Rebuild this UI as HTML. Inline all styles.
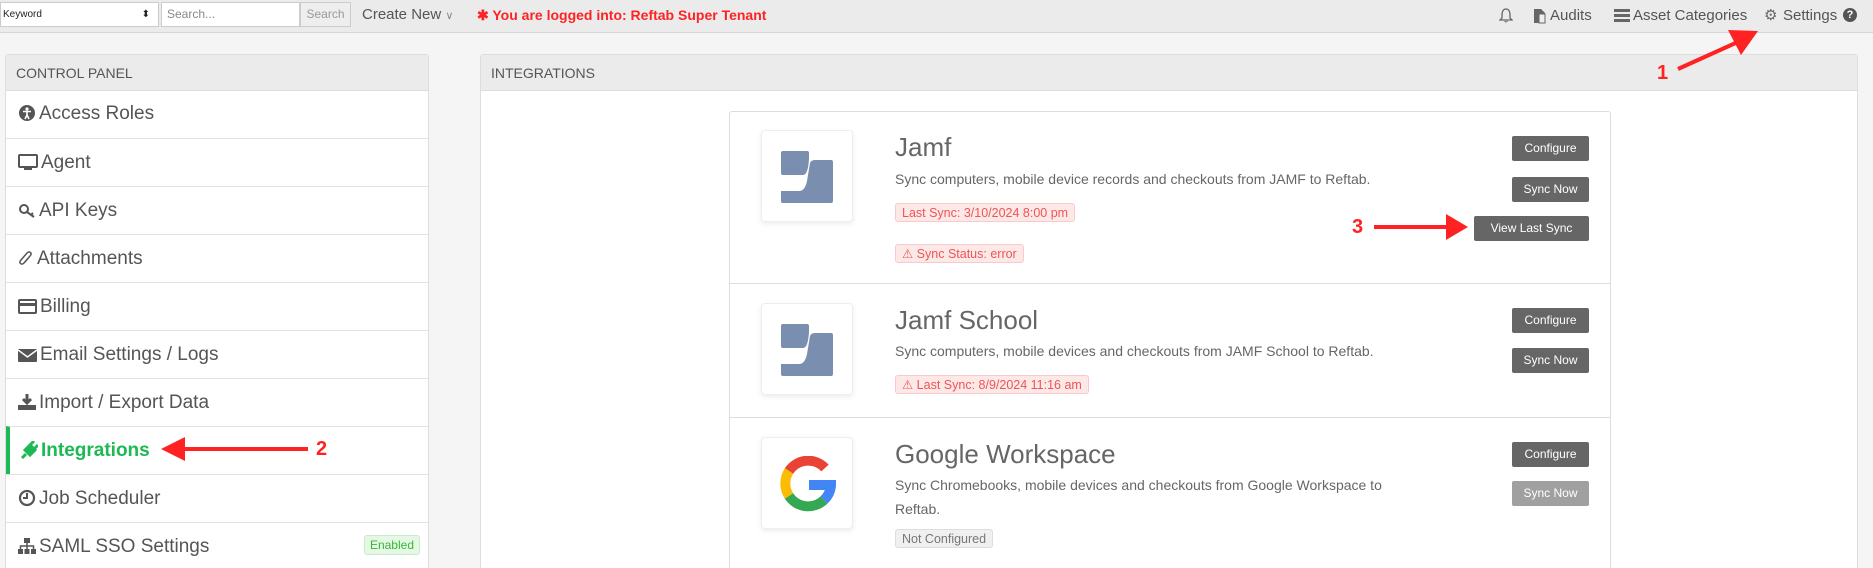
<!DOCTYPE html>
<html><head><meta charset="utf-8"><style>
*{box-sizing:border-box;margin:0;padding:0}
html,body{width:1873px;height:568px;overflow:hidden}
body{background:#f5f5f5;font-family:"Liberation Sans",sans-serif;color:#555;position:relative}
.a{position:absolute}
.top{left:0;top:0;width:1873px;height:33px;background:#ebebeb;border-bottom:1px solid #d6d6d6}
.panel{background:#fff;border:1px solid #ddd;border-bottom:none;border-radius:3px 3px 0 0}
.ph{background:#ebebeb;border-bottom:1px solid #ddd;height:36px;font-size:14px;line-height:36px;padding-left:10px;color:#555}
.item{position:absolute;left:0;width:100%;height:48px;border-top:1px solid #e2e2e2;font-size:19px;line-height:48px;padding-left:12px;color:#555}
.item svg{vertical-align:-3px;margin-right:3px}
.btn{position:absolute;background:#666;color:#fff;font-size:12px;text-align:center;border-radius:2px;height:25px;line-height:25px}
.title{position:absolute;font-size:26px;color:#666}
.desc{position:absolute;font-size:14px;color:#666;line-height:24px}
.badge{position:absolute;font-size:12.5px;height:19px;line-height:19px;padding:0 6px;border-radius:3px;background:#fde8e8;border:1px solid #f8caca;color:#e55}
.logo{position:absolute;left:761px;width:92px;height:92px;border:1px solid #eee;border-radius:4px;box-shadow:0 2px 6px rgba(0,0,0,.08);background:#fff}
.red{color:#f22}
</style></head><body>
<div class="a top"></div>
<div class="a" style="left:0;top:2px;width:159px;height:25px;background:#fff;border:1px solid #ccc;font-size:10px;line-height:23px;padding-left:2px;color:#222">Keyword<span style="position:absolute;right:8px;top:0;font-size:10px">&#x2B0D;</span></div>
<div class="a" style="left:161px;top:2px;width:139px;height:25px;background:#fff;border:1px solid #ccc;font-size:12px;line-height:23px;padding-left:5px;color:#888">Search...</div>
<div class="a" style="left:300px;top:2px;width:51px;height:25px;background:#eee;border:1px solid #ccc;font-size:12px;line-height:23px;text-align:center;color:#999">Search</div>
<div class="a" style="left:362px;top:6px;font-size:15px;color:#555">Create New <span style="font-size:11px;color:#888">&#8744;</span></div>
<div class="a" style="left:477px;top:7px;font-size:14px;font-weight:bold;color:#f22">&#x2731; You are logged into: Reftab Super Tenant</div>
<svg class="a" style="left:1499px;top:8px" width="14" height="15" viewBox="0 0 14 15"><path d="M7 1C4 1 3 4 3 7V10L1 12H13L11 10V7C11 4 10 1 7 1Z" fill="none" stroke="#666" stroke-width="1.3"/><path d="M5.5 13Q7 15 8.5 13" stroke="#666" fill="none"/></svg>
<svg class="a" style="left:1533px;top:8px" width="14" height="16" viewBox="0 0 14 16"><path d="M1 1h7l4 4v10H1z" fill="#666"/><path d="M6 6h6v9H6z" fill="#eee" stroke="#666"/></svg>
<div class="a" style="left:1550px;top:7px;font-size:15px;color:#555">Audits</div>
<svg class="a" style="left:1614px;top:9px" width="16" height="13"><rect y="0" width="16" height="3" fill="#666"/><rect y="5" width="16" height="3" fill="#666"/><rect y="10" width="16" height="3" fill="#666"/></svg>
<div class="a" style="left:1633px;top:7px;font-size:15px;color:#555">Asset Categories</div>
<div class="a" style="left:1764px;top:6px;font-size:15px;color:#666">&#x2699;</div>
<div class="a" style="left:1783px;top:7px;font-size:15px;color:#555">Settings</div>
<div class="a" style="left:1843px;top:8px;width:14px;height:14px;border-radius:50%;background:#555;color:#fff;font-size:11px;font-weight:bold;text-align:center;line-height:14px">?</div>

<div class="a panel" style="left:5px;top:54px;width:424px;height:514px">
<div class="ph">CONTROL PANEL</div>
<div class="item" style="top:35px;border-top:none"><svg width="18" height="18"><circle cx="9" cy="9" r="8" fill="#555"/><circle cx="9" cy="5" r="1.6" fill="#fff"/><path d="M5 7.5H13M9 7.5V11M9 11L7 15M9 11L11 15" stroke="#fff" stroke-width="1.6" fill="none"/></svg>Access Roles</div>
<div class="item" style="top:83px"><svg width="20" height="17"><rect x="1" y="1" width="18" height="12" rx="1" fill="none" stroke="#555" stroke-width="2"/><rect x="6" y="13" width="8" height="3" fill="#555"/></svg>Agent</div>
<div class="item" style="top:131px"><svg width="18" height="17"><circle cx="6" cy="7" r="4" fill="none" stroke="#555" stroke-width="2"/><path d="M9 10l7 5M13 13l2-2" stroke="#555" stroke-width="2"/></svg>API Keys</div>
<div class="item" style="top:179px"><svg width="16" height="17"><path d="M12 6L6 13Q4 15 2.5 13.5Q1 12 3 10L9 3Q11 1 12.5 2.5Q14 4 12 6L7 12" stroke="#555" stroke-width="1.5" fill="none"/></svg>Attachments</div>
<div class="item" style="top:227px"><svg width="19" height="16"><rect x="1" y="1" width="17" height="13" rx="1" fill="none" stroke="#555" stroke-width="2"/><rect x="1" y="4" width="17" height="3" fill="#555"/></svg>Billing</div>
<div class="item" style="top:275px"><svg width="19" height="15"><rect x="0" y="1" width="19" height="13" rx="1" fill="#555"/><path d="M0 2l9.5 7L19 2" stroke="#fff" stroke-width="1.5" fill="none"/></svg>Email Settings / Logs</div>
<div class="item" style="top:323px"><svg width="18" height="17"><path d="M9 0v9M5 5l4 4 4-4" stroke="#555" stroke-width="3" fill="none"/><rect x="0" y="11" width="18" height="5" fill="#555"/></svg>Import / Export Data</div>
<div class="item" style="top:371px;border-left:4px solid #1db954;color:#1db954;font-weight:bold;padding-left:10px"><svg width="18" height="18"><path d="M2 17l4-4M5 9l5-5 5 5-5 5z M11 3l3-3M15 7l3-3" stroke="#1db954" stroke-width="3" fill="#1db954"/></svg>Integrations</div>
<div class="item" style="top:419px"><svg width="18" height="18"><circle cx="9" cy="9" r="7" fill="none" stroke="#555" stroke-width="2.2"/><path d="M9 4v5H5" stroke="#555" stroke-width="2" fill="none"/></svg>Job Scheduler</div>
<div class="item" style="top:467px"><svg width="18" height="17"><rect x="6" y="0" width="6" height="5" fill="#555"/><rect x="0" y="11" width="5" height="5" fill="#555"/><rect x="6.5" y="11" width="5" height="5" fill="#555"/><rect x="13" y="11" width="5" height="5" fill="#555"/><path d="M9 5v6M2.5 11V8h13v3" stroke="#555" stroke-width="1.5" fill="none"/></svg>SAML SSO Settings<span style="position:absolute;right:8px;top:12px;font-size:12px;line-height:18px;padding:0 5px;background:#e6f7e6;border:1px solid #c8eec8;border-radius:3px;color:#3b3">Enabled</span></div>
</div>

<div class="a panel" style="left:480px;top:54px;width:1378px;height:514px">
<div class="ph">INTEGRATIONS</div>
</div>
<div class="a" style="left:729px;top:111px;width:882px;height:457px;background:#fff;border:1px solid #ddd;border-bottom:none;border-radius:3px 3px 0 0"></div>
<div class="a" style="left:729px;top:283px;width:882px;height:1px;background:#ddd"></div>
<div class="a" style="left:729px;top:417px;width:882px;height:1px;background:#ddd"></div>

<!-- row1 -->
<div class="logo" style="top:130px"><svg style="position:absolute;left:19px;top:20px" width="52" height="52" viewBox="0 0 52 52"><path d="M0 2Q0 0 2 0H26Q28 0 28 2V8Q27 24 22 24H2Q0 24 0 22Z" fill="#7a8fb0"/><path d="M0 40H18Q24 40 26 30L29 12Q30 9 34 9H50Q52 9 52 11V50Q52 52 50 52H2Q0 52 0 50Z" fill="#7a8fb0"/></svg></div>
<div class="title" style="left:895px;top:132px">Jamf</div>
<div class="desc" style="left:895px;top:167px">Sync computers, mobile device records and checkouts from JAMF to Reftab.</div>
<div class="badge" style="left:895px;top:203px">Last Sync: 3/10/2024 8:00 pm</div>
<div class="badge" style="left:895px;top:244px">&#x26A0; Sync Status: error</div>
<div class="btn" style="left:1512px;top:136px;width:77px">Configure</div>
<div class="btn" style="left:1512px;top:177px;width:77px">Sync Now</div>
<div class="btn" style="left:1474px;top:216px;width:115px">View Last Sync</div>

<!-- row2 -->
<div class="logo" style="top:303px"><svg style="position:absolute;left:19px;top:20px" width="52" height="52" viewBox="0 0 52 52"><path d="M0 2Q0 0 2 0H26Q28 0 28 2V8Q27 24 22 24H2Q0 24 0 22Z" fill="#7a8fb0"/><path d="M0 40H18Q24 40 26 30L29 12Q30 9 34 9H50Q52 9 52 11V50Q52 52 50 52H2Q0 52 0 50Z" fill="#7a8fb0"/></svg></div>
<div class="title" style="left:895px;top:305px">Jamf School</div>
<div class="desc" style="left:895px;top:339px">Sync computers, mobile devices and checkouts from JAMF School to Reftab.</div>
<div class="badge" style="left:895px;top:375px">&#x26A0; Last Sync: 8/9/2024 11:16 am</div>
<div class="btn" style="left:1512px;top:308px;width:77px">Configure</div>
<div class="btn" style="left:1512px;top:348px;width:77px">Sync Now</div>

<!-- row3 -->
<div class="logo" style="top:437px"><svg style="position:absolute;left:18px;top:18px" width="56" height="56" viewBox="0 0 56 56">
<path d="M45 12A23 23 0 0 0 9 15" stroke="#ea4335" stroke-width="10" fill="none"/>
<path d="M9 15A23 23 0 0 0 9 40" stroke="#fbbc05" stroke-width="10" fill="none"/>
<path d="M9 40A23 23 0 0 0 44 44" stroke="#34a853" stroke-width="10" fill="none"/>
<path d="M44 44A23 23 0 0 0 51 29H29" stroke="#4285f4" stroke-width="10" fill="none"/></svg></div>
<div class="title" style="left:895px;top:439px">Google Workspace</div>
<div class="desc" style="left:895px;top:473px">Sync Chromebooks, mobile devices and checkouts from Google Workspace to<br>Reftab.</div>
<div class="badge" style="left:895px;top:529px;background:#f0f0f0;border-color:#ddd;color:#777">Not Configured</div>
<div class="btn" style="left:1512px;top:442px;width:77px">Configure</div>
<div class="btn" style="left:1512px;top:481px;width:77px;background:#a0a0a0">Sync Now</div>

<!-- annotations -->
<svg class="a" style="left:0;top:0" width="1873" height="568">
<line x1="1678" y1="69" x2="1740" y2="41" stroke="#f22" stroke-width="4"/>
<polygon points="1758,31 1728,30 1741,55" fill="#f22"/>
<line x1="308" y1="449" x2="180" y2="449" stroke="#f22" stroke-width="4"/>
<polygon points="161,449 185,437 185,461" fill="#f22"/>
<line x1="1374" y1="227" x2="1450" y2="227" stroke="#f22" stroke-width="4"/>
<polygon points="1468,227 1446,214 1446,240" fill="#f22"/>
</svg>
<div class="a red" style="left:1657px;top:62px;font-size:20px;font-weight:bold">1</div>
<div class="a red" style="left:316px;top:438px;font-size:20px;font-weight:bold">2</div>
<div class="a red" style="left:1352px;top:216px;font-size:20px;font-weight:bold">3</div>
</body></html>
